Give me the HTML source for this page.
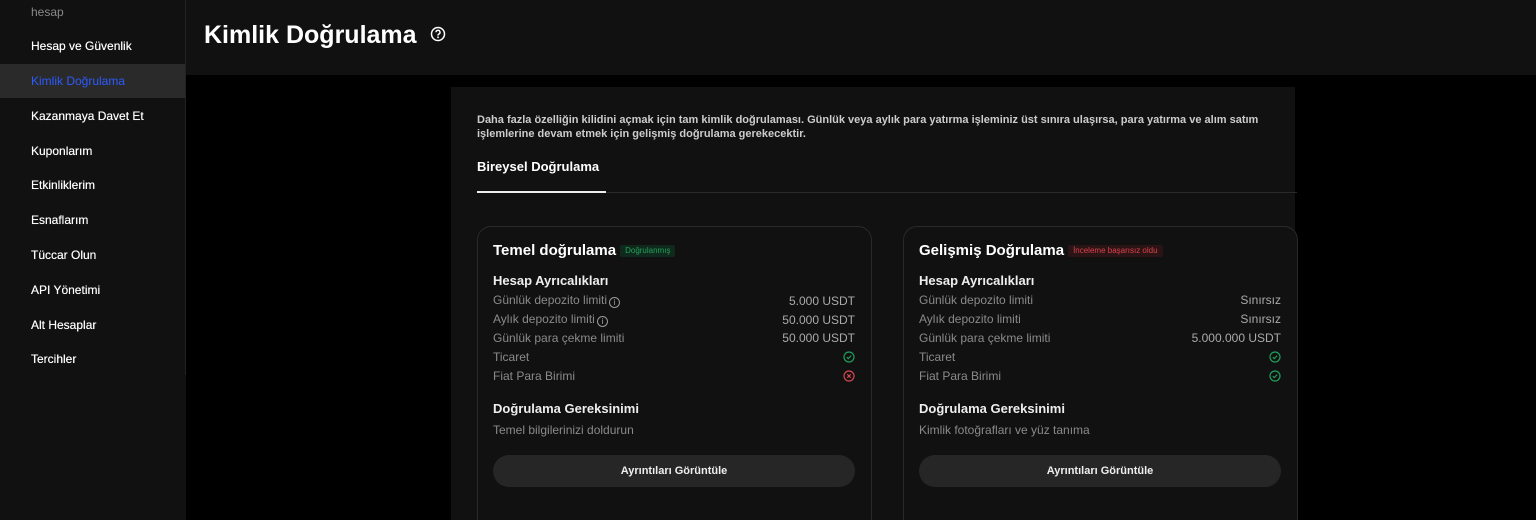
<!DOCTYPE html>
<html><head><meta charset="utf-8"><style>
*{margin:0;padding:0;box-sizing:border-box}
html,body{width:1536px;height:520px;overflow:hidden}
body{background:#000;font-family:"Liberation Sans",sans-serif;color:#fff;position:relative}
.side{position:absolute;left:0;top:0;width:186px;height:520px;background:#111}
.sideline{position:absolute;left:185px;top:0;width:1px;height:375px;background:#222}
.si{position:absolute;left:31px;font-size:12px;color:#fff;line-height:16px;text-shadow:0 0 0.4px #fff}
.act{position:absolute;left:0;top:64px;width:185px;height:34px;background:#2a2a2a}
.hdr{position:absolute;left:186px;top:0;width:1350px;height:75px;background:#111}
.title{position:absolute;left:204px;top:18px;font-size:25px;font-weight:bold;line-height:34px}
.panel{position:absolute;left:451px;top:87px;width:844px;height:433px;background:#111}
.intro{position:absolute;left:477px;top:113px;width:800px;font-size:11px;line-height:14px;color:#ccc;font-weight:bold}
.tab{position:absolute;left:477px;top:159px;font-size:13px;font-weight:bold;line-height:16px}
.tl{position:absolute;left:477px;top:192px;width:820px;height:1px;background:#2a2a2a}
.tu{position:absolute;left:477px;top:191px;width:129px;height:2px;background:#eee}
.wrap{position:absolute;left:0;top:0;width:1536px;height:520px;overflow:hidden}
.card{position:absolute;top:226px;width:395px;height:310px;border:1px solid #2a2a2a;border-radius:14px;background:#111}
.ct{position:absolute;left:15px;top:15px;font-size:15px;font-weight:bold;line-height:18px;white-space:nowrap}
.badge{display:inline-block;vertical-align:2px;margin-left:4px;font-size:8px;font-weight:normal;padding:1px 5px;line-height:10px;border-radius:2px}
.h{position:absolute;left:15px;font-size:13px;font-weight:bold;line-height:16px;color:#eee}
.r{position:absolute;left:15px;right:16px;font-size:12px;line-height:14px;color:#8a8a8a;display:flex;justify-content:space-between;align-items:center}
.r span:last-child{color:#aaa}
.d{position:absolute;left:15px;font-size:12px;line-height:14px;color:#8a8a8a}
.btn{position:absolute;left:15px;right:16px;top:228px;height:32px;border-radius:16px;background:#262626;font-size:11px;font-weight:bold;text-align:center;line-height:32px;color:#eee}
.ii{display:inline-block;width:11px;height:11px;border:1px solid #999;border-radius:50%;font-size:8px;text-align:center;line-height:9px;color:#999;vertical-align:-1px;margin-left:2px}
svg{display:block}
</style></head><body><div class="wrap">
<div class="side"></div><div class="sideline"></div><div class="act"></div>
<div class="si" style="top:4px;color:#888;text-shadow:none">hesap</div>
<div class="si" style="top:38px">Hesap ve Güvenlik</div>
<div class="si" style="top:73px;color:#2d5bff;text-shadow:none">Kimlik Doğrulama</div>
<div class="si" style="top:108px">Kazanmaya Davet Et</div>
<div class="si" style="top:143px">Kuponlarım</div>
<div class="si" style="top:177px">Etkinliklerim</div>
<div class="si" style="top:212px">Esnaflarım</div>
<div class="si" style="top:247px">Tüccar Olun</div>
<div class="si" style="top:282px">API Yönetimi</div>
<div class="si" style="top:317px">Alt Hesaplar</div>
<div class="si" style="top:351px">Tercihler</div>
<div class="hdr"></div>
<div class="title">Kimlik Doğrulama</div>
<svg style="position:absolute;left:430px;top:26px" width="16" height="16" viewBox="0 0 16 16"><circle cx="8" cy="8" r="6.5" fill="none" stroke="#fff" stroke-width="1.5"/><path d="M6 6.3a2 2 0 1 1 2.6 1.9c-.5.2-.6.5-.6 1v.4" fill="none" stroke="#fff" stroke-width="1.4"/><circle cx="8" cy="11.3" r=".9" fill="#fff"/></svg>
<div class="panel"></div>
<div class="intro">Daha fazla özelliğin kilidini açmak için tam kimlik doğrulaması. Günlük veya aylık para yatırma işleminiz üst sınıra ulaşırsa, para yatırma ve alım satım işlemlerine devam etmek için gelişmiş doğrulama gerekecektir.</div>
<div class="tab">Bireysel Doğrulama</div>
<div class="tl"></div><div class="tu"></div>

<div class="card" style="left:477px">
<div class="ct">Temel doğrulama<span class="badge" style="background:#0f2a1c;color:#22a05a">Doğrulanmış</span></div>
<div class="h" style="top:46px">Hesap Ayrıcalıkları</div>
<div class="r" style="top:66px"><span>Günlük depozito limiti<span class="ii">i</span></span><span>5.000 USDT</span></div>
<div class="r" style="top:85px"><span>Aylık depozito limiti<span class="ii">i</span></span><span>50.000 USDT</span></div>
<div class="r" style="top:104px"><span>Günlük para çekme limiti</span><span>50.000 USDT</span></div>
<div class="r" style="top:123px"><span>Ticaret</span><svg width="12" height="12" viewBox="0 0 12 12"><circle cx="6" cy="6" r="5" fill="none" stroke="#1f9d5c" stroke-width="1.2"/><path d="M3.8 6.2l1.5 1.4 2.8-3" fill="none" stroke="#1f9d5c" stroke-width="1.2"/></svg></div>
<div class="r" style="top:142px"><span>Fiat Para Birimi</span><svg width="12" height="12" viewBox="0 0 12 12"><circle cx="6" cy="6" r="5" fill="none" stroke="#d9474f" stroke-width="1.2"/><path d="M4.3 4.3l3.4 3.4M7.7 4.3l-3.4 3.4" stroke="#d9474f" stroke-width="1.2"/></svg></div>
<div class="h" style="top:174px">Doğrulama Gereksinimi</div>
<div class="d" style="top:196px">Temel bilgilerinizi doldurun</div>
<div class="btn">Ayrıntıları Görüntüle</div>
</div>

<div class="card" style="left:903px">
<div class="ct">Gelişmiş Doğrulama<span class="badge" style="background:#2a1416;color:#e0414b">İnceleme başarısız oldu</span></div>
<div class="h" style="top:46px">Hesap Ayrıcalıkları</div>
<div class="r" style="top:66px"><span>Günlük depozito limiti</span><span>Sınırsız</span></div>
<div class="r" style="top:85px"><span>Aylık depozito limiti</span><span>Sınırsız</span></div>
<div class="r" style="top:104px"><span>Günlük para çekme limiti</span><span>5.000.000 USDT</span></div>
<div class="r" style="top:123px"><span>Ticaret</span><svg width="12" height="12" viewBox="0 0 12 12"><circle cx="6" cy="6" r="5" fill="none" stroke="#1f9d5c" stroke-width="1.2"/><path d="M3.8 6.2l1.5 1.4 2.8-3" fill="none" stroke="#1f9d5c" stroke-width="1.2"/></svg></div>
<div class="r" style="top:142px"><span>Fiat Para Birimi</span><svg width="12" height="12" viewBox="0 0 12 12"><circle cx="6" cy="6" r="5" fill="none" stroke="#1f9d5c" stroke-width="1.2"/><path d="M3.8 6.2l1.5 1.4 2.8-3" fill="none" stroke="#1f9d5c" stroke-width="1.2"/></svg></div>
<div class="h" style="top:174px">Doğrulama Gereksinimi</div>
<div class="d" style="top:196px">Kimlik fotoğrafları ve yüz tanıma</div>
<div class="btn">Ayrıntıları Görüntüle</div>
</div>
</div></body></html>
